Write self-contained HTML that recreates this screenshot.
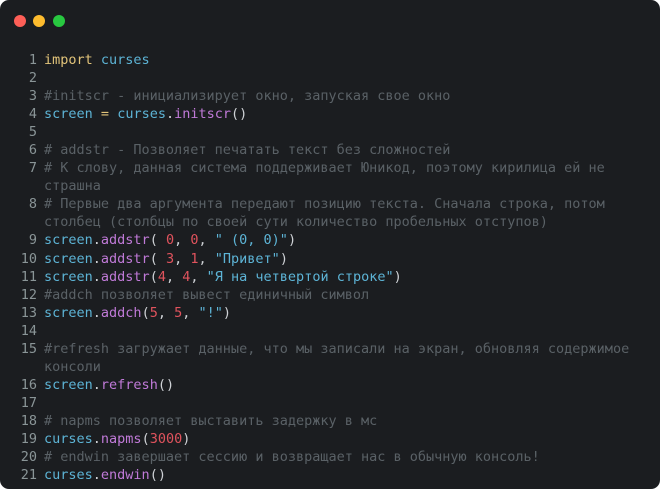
<!DOCTYPE html>
<html><head><meta charset="utf-8"><style>
html,body{margin:0;padding:0;background:#fff;}
.win{position:absolute;left:0;top:0;width:660px;height:489px;background:#1b1d20;border-radius:9px;overflow:hidden;}
.dot{position:absolute;top:15px;width:12px;height:12px;border-radius:50%;}
pre{position:absolute;left:0;top:51px;margin:0;font-family:"DejaVu Sans Mono","Liberation Mono",monospace;font-size:13.5px;line-height:18.05px;color:#cfd2d6;white-space:pre;}
.n{color:#8a9597;display:inline-block;width:37px;text-align:right;margin-right:7px;}
.k{color:#e2c47a}.b{color:#5db4d6}.p{color:#c07ad8}.r{color:#e0535d}.c{color:#5a6166}.s{color:#5db4d6}
</style></head><body><div class="win">
<div class="dot" style="left:14px;background:#fe5f57"></div>
<div class="dot" style="left:33px;background:#febc2e"></div>
<div class="dot" style="left:53px;background:#28c840"></div>
<pre><span class="n">1</span><span class="k">import</span> <span class="b">curses</span>
<span class="n">2</span>
<span class="n">3</span><span class="c">#initscr - инициализирует окно, запуская свое окно</span>
<span class="n">4</span><span class="b">screen</span> <span class="k">=</span> <span class="b">curses</span>.<span class="p">initscr</span>()
<span class="n">5</span>
<span class="n">6</span><span class="c"># addstr - Позволяет печатать текст без сложностей</span>
<span class="n">7</span><span class="c"># К слову, данная система поддерживает Юникод, поэтому кирилица ей не</span>
<span class="n"></span><span class="c">страшна</span>
<span class="n">8</span><span class="c"># Первые два аргумента передают позицию текста. Сначала строка, потом</span>
<span class="n"></span><span class="c">столбец (столбцы по своей сути количество пробельных отступов)</span>
<span class="n">9</span><span class="b">screen</span>.<span class="p">addstr</span>( <span class="r">0</span>, <span class="r">0</span>, <span class="s">" (0, 0)"</span>)
<span class="n">10</span><span class="b">screen</span>.<span class="p">addstr</span>( <span class="r">3</span>, <span class="r">1</span>, <span class="s">"Привет"</span>)
<span class="n">11</span><span class="b">screen</span>.<span class="p">addstr</span>(<span class="r">4</span>, <span class="r">4</span>, <span class="s">"Я на четвертой строке"</span>)
<span class="n">12</span><span class="c">#addch позволяет вывест единичный символ</span>
<span class="n">13</span><span class="b">screen</span>.<span class="p">addch</span>(<span class="r">5</span>, <span class="r">5</span>, <span class="s">"!"</span>)
<span class="n">14</span>
<span class="n">15</span><span class="c">#refresh загружает данные, что мы записали на экран, обновляя содержимое</span>
<span class="n"></span><span class="c">консоли</span>
<span class="n">16</span><span class="b">screen</span>.<span class="p">refresh</span>()
<span class="n">17</span>
<span class="n">18</span><span class="c"># napms позволяет выставить задержку в мс</span>
<span class="n">19</span><span class="b">curses</span>.<span class="p">napms</span>(<span class="r">3000</span>)
<span class="n">20</span><span class="c"># endwin завершает сессию и возвращает нас в обычную консоль!</span>
<span class="n">21</span><span class="b">curses</span>.<span class="p">endwin</span>()</pre>
</div></body></html>
